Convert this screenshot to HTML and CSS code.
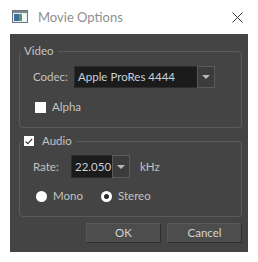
FILE: index.html
```html
<!DOCTYPE html>
<html>
<head>
<meta charset="utf-8">
<link rel="stylesheet" href="styles.css">
</head>
<body>
<div class="titlebar">
  <svg class="app-icon" width="16" height="13" viewBox="0 0 16 13">
    <rect x="0.5" y="0.5" width="15" height="12" fill="#e9eef3" stroke="#6f7680"/>
    <rect x="1" y="1" width="14" height="2" fill="#7d8794"/>
    <rect x="2" y="4" width="5" height="7" fill="#3f6d9e"/>
    <rect x="7" y="4" width="3" height="7" fill="#4ea35c"/>
    <rect x="10" y="4" width="4" height="7" fill="#f7f9fb"/>
  </svg>
  <span class="title">Movie Options</span>
  <svg class="close" width="11" height="11" viewBox="0 0 11 11">
    <path d="M0.5 0.5 L10.5 10.5 M10.5 0.5 L0.5 10.5" stroke="#3a3a3a" stroke-width="1" fill="none"/>
  </svg>
</div>
<div class="panel">
  <div class="group group-video">
    <span class="legend">Video</span>
    <div class="row codec-row">
      <span class="label label-codec">Codec:</span>
      <div class="combo combo-codec">
        <span class="combo-text">Apple ProRes 4444</span>
        <span class="combo-arrow"><span class="tri"></span></span>
      </div>
    </div>
    <div class="row check-row">
      <span class="checkbox"></span>
      <span class="label">Alpha</span>
    </div>
  </div>
  <div class="group group-audio">
    <span class="legend legend-check">
      <span class="checkbox small checked">
        <svg width="8" height="7" viewBox="0 0 8 7"><path d="M0.8 3.6 L2.8 5.6 L7.2 0.8" stroke="#2a2a2a" stroke-width="1.1" fill="none"/></svg>
      </span>
      <span>Audio</span>
    </span>
    <div class="row rate-row">
      <span class="label label-rate">Rate:</span>
      <div class="combo combo-rate">
        <span class="combo-text">22.050</span>
        <span class="combo-arrow"><span class="tri"></span></span>
      </div>
      <span class="label khz">kHz</span>
    </div>
    <div class="row radio-row">
      <span class="radio checked"></span>
      <span class="label label-mono">Mono</span>
      <span class="radio ring"></span>
      <span class="label">Stereo</span>
    </div>
  </div>
  <div class="buttons">
    <button class="btn">OK</button>
    <button class="btn">Cancel</button>
  </div>
</div>
</body>
</html>
```
FILE: styles.css
```css
html, body {
  margin: 0;
  padding: 0;
  background: #ffffff;
}
body {
  width: 258px;
  height: 262px;
  overflow: hidden;
  font-family: Lato, "Open Sans", sans-serif;
}
.titlebar {
  height: 34px;
  display: flex;
  align-items: center;
  padding: 0 15px 0 12px;
  box-sizing: border-box;
}
.app-icon {
  margin-top: -1px;
}
.title {
  margin-left: 10px;
  font-size: 13px;
  color: #8f8f8f;
  flex: 1;
  margin-top: -1px;
}
.close {
  margin-top: 1px;
}
.panel {
  margin: 0 10px;
  height: 218px;
  background: #444444;
  padding: 0 6px 0 9px;
  box-sizing: border-box;
  display: flex;
  flex-direction: column;
  font-size: 11.5px;
  color: #c3c3c3;
}
.group {
  position: relative;
  border: 1px solid #5b5b5b;
  border-radius: 4px;
  box-sizing: border-box;
  padding: 0 0 0 13px;
}
.group-video {
  margin-top: 17px;
  height: 77px;
}
.group-audio {
  margin-top: 13px;
  height: 76px;
}
.legend {
  position: absolute;
  top: -9px;
  left: 1px;
  padding: 0 4px 0 3px;
  background: #444444;
  line-height: 16px;
  display: flex;
  align-items: center;
}
.legend-check {
  left: 3px;
  padding-left: 1px;
}
.legend-check .checkbox {
  margin-right: 8px;
}
.row {
  display: flex;
  align-items: center;
}
.codec-row {
  margin-top: 14px;
  height: 22px;
}
.check-row {
  margin-top: 11px;
  padding-left: 2px;
}
.label {
  line-height: 16px;
}
.label-codec {
  width: 41px;
  flex: none;
}
.label-rate {
  width: 38px;
  flex: none;
}
.label-mono {
  width: 48px;
  flex: none;
}
.combo {
  display: flex;
  background: #1b1b1b;
  box-sizing: border-box;
  height: 22px;
  border: 1px solid #2c2c2c;
  color: #c9d0db;
}
.combo-codec {
  width: 141px;
}
.combo-text {
  flex: 1;
  padding-left: 3px;
  line-height: 20px;
}
.combo-arrow {
  width: 16px;
  border: 1px solid #5a5a5a;
  margin: -1px -1px -1px 0;
  background: #3c3c3c;
  display: flex;
  align-items: center;
  justify-content: center;
}
.tri {
  width: 0;
  height: 0;
  border-left: 4px solid transparent;
  border-right: 4px solid transparent;
  border-top: 4px solid #b8b8b8;
}
.checkbox {
  width: 11px;
  height: 11px;
  background: #ffffff;
  margin-right: 6px;
  display: inline-flex;
  align-items: center;
  justify-content: center;
  flex: none;
}
.checkbox.small {
  width: 10px;
  height: 10px;
}
.rate-row {
  margin-top: 13px;
  height: 23px;
}
.combo-rate {
  width: 59px;
  height: 23px;
}
.combo-rate .combo-text {
  padding-left: 3px;
  line-height: 21px;
}
.khz {
  margin-left: 10px;
}
.radio-row {
  margin-top: 10px;
  padding-left: 3px;
}
.radio {
  width: 11px;
  height: 11px;
  border-radius: 50%;
  background: #ffffff;
  box-sizing: border-box;
  margin-right: 6px;
  flex: none;
}
.radio.ring {
  border: 3px solid #ffffff;
  background: #2a2a2a;
}
.buttons {
  display: flex;
  justify-content: flex-end;
  gap: 6px;
  margin-top: 6px;
}
.btn {
  width: 75px;
  height: 20px;
  font-family: inherit;
  font-size: 11.5px;
  color: #d4d4d4;
  background: #4d4d4d;
  border: 1px solid #2f2f2f;
  border-top-color: #5a5a5a;
  border-left-color: #565656;
  padding: 0;
  line-height: 16px;
}
```
